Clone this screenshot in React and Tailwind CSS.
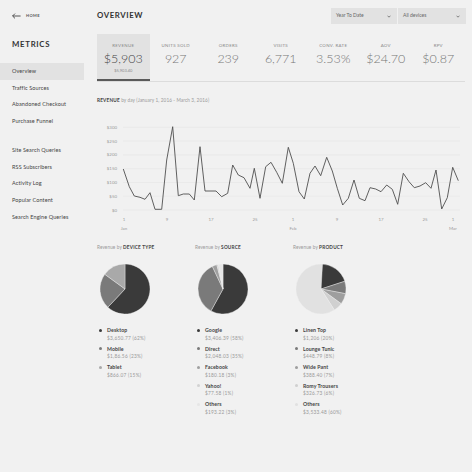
import React from "react";

const navTop = ["Overview", "Traffic Sources", "Abandoned Checkout", "Purchase Funnel"];
const navBottom = [
  "Site Search Queries",
  "RSS Subscribers",
  "Activity Log",
  "Popular Content",
  "Search Engine Queries",
];

const kpis = [
  { label: "REVENUE", value: "$5,903", sub: "$5,903.40", active: true },
  { label: "UNITS SOLD", value: "927" },
  { label: "ORDERS", value: "239" },
  { label: "VISITS", value: "6,771" },
  { label: "CONV. RATE", value: "3.53%" },
  { label: "AOV", value: "$24.70" },
  { label: "RPV", value: "$0.87" },
];

// chart points in page coordinates
const points = [
  [123.3, 169], [129.3, 186.7], [134.3, 196], [140, 197.3], [145, 199.3], [150, 192.7],
  [155, 209.3], [161.7, 209.3], [166.7, 160], [172.7, 126.7], [178.3, 195.7], [183.3, 194],
  [189.3, 194], [194.3, 200], [200, 146.7], [205, 191], [210, 191], [216, 191],
  [221.7, 196.7], [227.7, 193.3], [232.7, 165], [238.3, 175], [244, 177.7], [250, 188.3],
  [254.3, 168.3], [260, 198.3], [265.7, 166.7], [271, 162.3], [276.7, 172.3], [282.3, 183.3],
  [288.3, 147.3], [293.3, 163.3], [299, 191.7], [304.3, 199], [310, 173.3], [315, 166],
  [320.7, 175.7], [326.7, 157.3], [332.3, 171], [337.3, 188.3], [342.7, 205], [348.3, 198.3],
  [354, 180], [359.3, 198.3], [365, 200.7], [370, 187.7], [375.7, 189], [381, 191.7],
  [386.7, 185], [392.3, 189.3], [397.7, 204.3], [403.3, 173.3], [409, 181.7], [414.3, 187.7],
  [420, 186], [425.7, 182.7], [431, 188.3], [436, 170], [441.7, 209], [447.3, 197.7],
  [452.7, 167.3], [458.3, 180.7],
];

const yTicks = [
  ["$300", 127.3], ["$250", 141.1], ["$200", 154.9], ["$150", 168.7],
  ["$100", 182.5], ["$50", 196.2], ["$0", 210],
];
const xTicks = [
  ["1", 124], ["9", 167], ["17", 211], ["25", 255], ["1", 293],
  ["9", 337], ["17", 381], ["25", 425], ["1", 453],
];

const pies = [
  {
    title: "DEVICE TYPE",
    items: [
      { name: "Desktop", value: "$3,650.77 (62%)", pct: 62, color: "#3a3a3a" },
      { name: "Mobile", value: "$1,86.56 (23%)", pct: 23, color: "#7a7a7a" },
      { name: "Tablet", value: "$866.07 (15%)", pct: 15, color: "#a9a9a9" },
    ],
  },
  {
    title: "SOURCE",
    items: [
      { name: "Google", value: "$3,406.39 (58%)", pct: 58, color: "#3a3a3a" },
      { name: "Direct", value: "$2,048.03 (35%)", pct: 35, color: "#7a7a7a" },
      { name: "Facebook", value: "$180.18 (3%)", pct: 3, color: "#a0a0a0" },
      { name: "Yahoo!", value: "$77.58 (1%)", pct: 1, color: "#d2d2d2" },
      { name: "Others", value: "$193.22 (3%)", pct: 3, color: "#e6e6e6" },
    ],
  },
  {
    title: "PRODUCT",
    items: [
      { name: "Linen Top", value: "$1,206 (20%)", pct: 20, color: "#3a3a3a" },
      { name: "Lounge Tunic", value: "$448.79 (8%)", pct: 8, color: "#7a7a7a" },
      { name: "Wide Pant", value: "$388.40 (7%)", pct: 7, color: "#9e9e9e" },
      { name: "Romy Trousers", value: "$326.73 (6%)", pct: 6, color: "#d0d0d0" },
      { name: "Others", value: "$3,533.48 (60%)", pct: 60, color: "#e1e1e1" },
    ],
  },
];

function slicePath(start, end, r = 25) {
  const a0 = (start / 100) * Math.PI * 2 - Math.PI / 2;
  const a1 = (end / 100) * Math.PI * 2 - Math.PI / 2;
  const x0 = r + r * Math.cos(a0);
  const y0 = r + r * Math.sin(a0);
  const x1 = r + r * Math.cos(a1);
  const y1 = r + r * Math.sin(a1);
  const large = end - start > 50 ? 1 : 0;
  return `M${r},${r} L${x0},${y0} A${r},${r} 0 ${large} 1 ${x1},${y1} Z`;
}

const Pie = ({ items }) => {
  let acc = 0;
  return (
    <svg width="50" height="50" viewBox="0 0 50 50">
      {items.map((it) => {
        const d = slicePath(acc, acc + it.pct);
        acc += it.pct;
        return <path key={it.name} d={d} fill={it.color} stroke="#f1f1f1" strokeWidth="0.4" />;
      })}
    </svg>
  );
};

const Chevron = () => (
  <svg width="4" height="3" viewBox="0 0 4 3">
    <path d="M0.5 0.7 L2 2.2 L3.5 0.7" fill="none" stroke="#666" strokeWidth="0.8" />
  </svg>
);

export default function App() {
  return (
    <div className="w-[474px] h-[474px] bg-white font-['Lato',sans-serif] text-[#333]">
      <div className="w-[472px] h-[472px] bg-[#f1f1f1] flex">
        {/* Sidebar */}
        <aside className="w-[84px] shrink-0 flex flex-col">
          <div className="h-[32px] flex items-center pl-[12px] gap-[5px]">
            <svg width="9" height="6" viewBox="0 0 9 6">
              <path d="M0.6 3 H8.6 M3 0.6 L0.6 3 L3 5.4" fill="none" stroke="#444" strokeWidth="0.9" />
            </svg>
            <span className="text-[4px] font-bold tracking-[0.4px] text-[#555]">HOME</span>
          </div>
          <div className="h-[26px] flex items-center pl-[12px] text-[7.8px] font-bold tracking-[0.7px] text-[#333]">
            METRICS
          </div>
          <div className="mt-[5px] flex flex-col">
            {navTop.map((n, i) => (
              <div
                key={n}
                className={`h-[16.6px] flex items-center pl-[12px] text-[5.5px] tracking-[0.1px] text-[#444] ${
                  i === 0 ? "bg-[#e2e2e2]" : ""
                }`}
              >
                {n}
              </div>
            ))}
          </div>
          <div className="mt-[12.5px] flex flex-col">
            {navBottom.map((n) => (
              <div key={n} className="h-[16.7px] flex items-center pl-[12px] text-[5.5px] tracking-[0.1px] text-[#444]">
                {n}
              </div>
            ))}
          </div>
        </aside>

        {/* Main */}
        <main className="flex-1 ml-[13px] pr-[6px] flex flex-col">
          <div className="h-[32px] flex items-center justify-between">
            <span className="text-[7.8px] font-bold tracking-[0.6px] text-[#333]">OVERVIEW</span>
            <div className="flex gap-[1px]">
              <div className="w-[66px] h-[16px] bg-[#e2e2e2] flex items-center justify-between pl-[5px] pr-[6px]">
                <span className="text-[5px] text-[#666]">Year To Date</span>
                <Chevron />
              </div>
              <div className="w-[68px] h-[16px] bg-[#e2e2e2] flex items-center justify-between pl-[5px] pr-[6px]">
                <span className="text-[5px] text-[#666]">All devices</span>
                <Chevron />
              </div>
            </div>
          </div>

          {/* KPI tabs */}
          <div className="mt-[2px] h-[48px] flex border-b border-[#dcdcdc] w-[368px]">
            {kpis.map((k) => (
              <div
                key={k.label}
                className={`w-[52.5px] flex flex-col items-center pt-[8.5px] ${
                  k.active ? "bg-[#e2e2e2] border-b-2 border-[#5a5a5a]" : ""
                }`}
              >
                <div className="leading-[5px] text-[4.4px] tracking-[0.3px] text-[#888]">{k.label}</div>
                <div
                  className={`mt-[4.5px] leading-[14px] text-[12.5px] font-light ${
                    k.active ? "text-[#444]" : "text-[#777]"
                  }`}
                >
                  {k.value}
                </div>
                {k.sub && <div className="mt-[1.5px] leading-[5px] text-[4px] text-[#888]">{k.sub}</div>}
              </div>
            ))}
          </div>

          {/* Chart */}
          <div className="mt-[15px] leading-[6px] text-[4.7px] text-[#999] tracking-[0.1px]">
            <span className="font-bold text-[#444] tracking-[0.2px]">REVENUE</span> by day (January 1, 2016 - March 3, 2016)
          </div>
          <svg className="mt-[3px]" width="369" height="128" viewBox="97 106 369 128">
            {yTicks.map(([t, y]) => (
              <g key={t}>
                <line x1="123" x2="460" y1={y} y2={y} stroke="#e2e2e2" strokeWidth="0.5" />
                <text x="117" y={y + 1.5} fontSize="4.4" fill="#999" textAnchor="end">
                  {t}
                </text>
              </g>
            ))}
            {xTicks.map(([t, x], i) => (
              <text key={i} x={x} y="220.5" fontSize="4.4" fill="#999" textAnchor="middle">
                {t}
              </text>
            ))}
            <text x="124" y="229.5" fontSize="4.4" fill="#999" textAnchor="middle">Jan</text>
            <text x="293" y="229.5" fontSize="4.4" fill="#999" textAnchor="middle">Feb</text>
            <text x="453" y="229.5" fontSize="4.4" fill="#999" textAnchor="middle">Mar</text>
            <polyline
              points={points.map((p) => p.join(",")).join(" ")}
              fill="none"
              stroke="#4f4f4f"
              strokeWidth="0.9"
              strokeLinejoin="round"
            />
          </svg>

          {/* Pies */}
          <div className="mt-[10px] flex">
            {pies.map((p) => (
              <div key={p.title} className="w-[98px] flex flex-col">
                <div className="leading-[6px] text-[4.7px] text-[#999] tracking-[0.1px]">
                  Revenue by <span className="font-bold text-[#444] tracking-[0.2px]">{p.title}</span>
                </div>
                <div className="mt-[14px] ml-[3px]">
                  <Pie items={p.items} />
                </div>
                <div className="mt-[13px] flex flex-col">
                  {p.items.map((it) => (
                    <div key={it.name} className="h-[18.5px] flex flex-col">
                      <div className="flex items-center leading-[6px]">
                        <span
                          className="ml-[1.5px] w-[3px] h-[3px] rounded-full"
                          style={{ backgroundColor: it.color }}
                        />
                        <span className="ml-[5.5px] text-[5.2px] font-bold text-[#444] tracking-[0.1px]">{it.name}</span>
                      </div>
                      <div className="mt-[1.5px] ml-[10px] leading-[6px] text-[4.8px] text-[#999] tracking-[0.25px]">
                        {it.value}
                      </div>
                    </div>
                  ))}
                </div>
              </div>
            ))}
          </div>
        </main>
      </div>
    </div>
  );
}
